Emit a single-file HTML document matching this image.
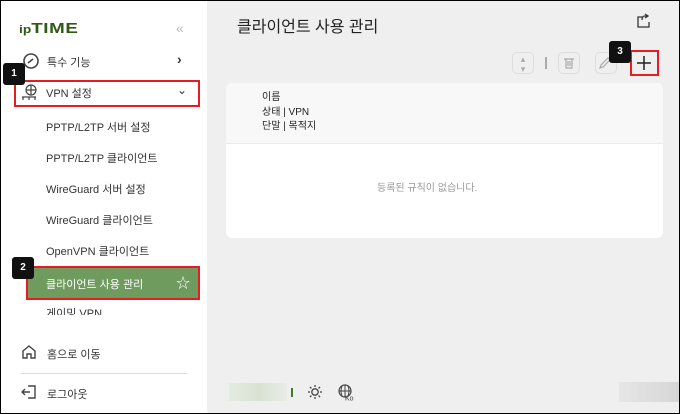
<!DOCTYPE html>
<html><head><meta charset="utf-8"><style>
*{margin:0;padding:0;box-sizing:border-box}
body{width:680px;height:414px;overflow:hidden;font-family:"Liberation Sans","Noto Sans CJK KR",sans-serif;background:#000;position:relative}
#wrap{position:absolute;left:1px;top:1px;width:678px;height:412px;background:#efefef;overflow:hidden}
#side{position:absolute;left:0;top:0;width:206px;height:412px;background:#fff}
.t{position:absolute;font-size:11px;color:#333;white-space:nowrap}
.badge{position:absolute;width:22px;height:22px;background:#111;color:#fff;font-size:10px;font-weight:bold;text-align:center;line-height:22px;border-radius:3px}
.red{position:absolute;border:2.5px solid #e51c23}
</style></head><body><div id="wrap">
<div id="side">
 <div class="t" style="left:18px;top:19px;font-size:15px;font-weight:900;color:#2f5a14;letter-spacing:0.5px;transform:scaleX(1.25);transform-origin:left"><span style="font-size:11px;font-weight:bold;letter-spacing:0">ip</span>TIME</div>
 <div class="t" style="left:175px;top:19px;color:#bbb;font-size:14px">«</div>
 <svg style="position:absolute;left:21px;top:51px" width="18" height="18" viewBox="0 0 18 18"><circle cx="9" cy="9" r="7" fill="none" stroke="#444" stroke-width="1.6"/><path d="M6 11l5-4" stroke="#444" stroke-width="1.6"/></svg>
 <div class="t" style="left:46px;top:53px">특수 기능</div>
 <div class="t" style="left:176px;top:50px;font-size:14px;font-weight:bold">›</div>
 <svg style="position:absolute;left:19px;top:82px" width="18" height="18" viewBox="0 0 18 18"><circle cx="11" cy="7" r="5" fill="none" stroke="#444" stroke-width="1.2"/><path d="M6 7h10M11 2v10M2 14h14M3 14v3M9 14v3M15 14v3" stroke="#444" stroke-width="1.2"/></svg>
 <div class="t" style="left:45px;top:84px">VPN 설정</div>
 <div class="t" style="left:176px;top:82px;font-size:12px">⌄</div>
 <div class="red" style="left:13px;top:79px;width:186px;height:27px"></div>
 <div class="badge" style="left:2px;top:62px">1</div>
 <div class="t" style="left:45px;top:118px">PPTP/L2TP 서버 설정</div>
 <div class="t" style="left:45px;top:149px">PPTP/L2TP 클라이언트</div>
 <div class="t" style="left:45px;top:180px">WireGuard 서버 설정</div>
 <div class="t" style="left:45px;top:211px">WireGuard 클라이언트</div>
 <div class="t" style="left:45px;top:242px">OpenVPN 클라이언트</div>
 <div style="position:absolute;left:26px;top:266px;width:172px;height:31px;background:#6f9b5e"></div>
 <div class="t" style="left:45px;top:275px;color:#fff">클라이언트 사용 관리</div>
 <div class="t" style="left:175px;top:272px;color:#fff;font-size:14px">☆</div>
 <div class="red" style="left:25px;top:265px;width:174px;height:34px"></div>
 <div class="badge" style="left:11px;top:256px">2</div>
 <div class="t" style="left:45px;top:304px;height:10px;overflow:hidden">게이밍 VPN</div>
 <svg style="position:absolute;left:20px;top:343px" width="16" height="16" viewBox="0 0 16 16"><path d="M2 7l6-5 6 5v7h-4v-4H6v4H2z" fill="none" stroke="#444" stroke-width="1.4"/></svg>
 <div class="t" style="left:46px;top:345px">홈으로 이동</div>
 <div style="position:absolute;left:20px;top:372px;width:166px;height:1px;background:#ddd"></div>
 <svg style="position:absolute;left:20px;top:383px" width="16" height="16" viewBox="0 0 16 16"><path d="M7 2h7v12H7M1 8h8M4 5L1 8l3 3" fill="none" stroke="#444" stroke-width="1.4"/></svg>
 <div class="t" style="left:46px;top:385px">로그아웃</div>
</div>
<div class="t" style="left:236px;top:12px;font-size:16px;color:#222">클라이언트 사용 관리</div>
<svg style="position:absolute;left:635px;top:12px" width="15" height="15" viewBox="0 0 15 15"><path d="M6 4H2v10h11V9M9 1l3 2-3 2M12 3H9q-3 0-3 4" fill="none" stroke="#333" stroke-width="1.3"/></svg>
<div style="position:absolute;left:511px;top:51px;width:22px;height:22px;border:1px solid #ddd;border-radius:5px;color:#aaa;font-size:9px;text-align:center;line-height:10px;padding-top:1px">▴<br>▾</div>
<div style="position:absolute;left:544px;top:56px;width:2px;height:12px;background:#aaa"></div>
<div style="position:absolute;left:557px;top:51px;width:22px;height:22px;border:1px solid #ddd;border-radius:5px"></div>
<svg style="position:absolute;left:562px;top:56px" width="12" height="12" viewBox="0 0 12 12"><path d="M1 2h10M3 2v9h6V2M5 4v5M7 4v5" fill="none" stroke="#aaa" stroke-width="1.2"/></svg>
<div style="position:absolute;left:594px;top:51px;width:22px;height:22px;border:1px solid #ddd;border-radius:5px"></div>
<svg style="position:absolute;left:597px;top:55px" width="14" height="14" viewBox="0 0 14 14"><path d="M2 12l1-3 7-7 2 2-7 7z" fill="none" stroke="#aaa" stroke-width="1.2"/></svg>
<div class="red" style="left:629px;top:49px;width:29px;height:26px"></div>
<svg style="position:absolute;left:636px;top:55px" width="14" height="14" viewBox="0 0 14 14"><path d="M7 0v14M0 7h14" stroke="#222" stroke-width="1.5"/></svg>
<div class="badge" style="left:608px;top:40px">3</div>
<div style="position:absolute;left:225px;top:82px;width:437px;height:155px;background:#fff;border-radius:6px;overflow:hidden">
 <div style="height:61px;background:#f8f8f8;border-bottom:1px solid #eaeaea"></div>
</div>
<div class="t" style="left:261px;top:90px;font-size:10px;color:#222;line-height:14.5px">이름<br>상태 | VPN<br>단말 | 목적지</div>
<div class="t" style="left:376px;top:178px;font-size:10px;color:#999">등록된 규칙이 없습니다.</div>
<div style="position:absolute;left:228px;top:382px;width:58px;height:18px;background:linear-gradient(90deg,#e4ece2,#d7e2d3,#e8ece6)"></div>
<div style="position:absolute;left:290px;top:387px;width:2px;height:9px;background:#3d7a2a"></div>
<svg style="position:absolute;left:306px;top:383px" width="16" height="16" viewBox="0 0 16 16"><circle cx="8" cy="8" r="3.2" fill="none" stroke="#444" stroke-width="1.3"/><path d="M8 1v2M8 13v2M1 8h2M13 8h2M3 3l1.4 1.4M11.6 11.6L13 13M3 13l1.4-1.4M11.6 4.4L13 3" stroke="#444" stroke-width="1.3"/></svg>
<svg style="position:absolute;left:336px;top:382px" width="18" height="18" viewBox="0 0 18 18"><circle cx="8" cy="8" r="6" fill="none" stroke="#444" stroke-width="1.2"/><path d="M2 8h12M8 2v12M5 3q-2 5 0 10M11 3q2 5 0 10" fill="none" stroke="#444" stroke-width="1"/><text x="8" y="17.5" font-size="7" fill="#444" font-family="Liberation Sans">Ko</text></svg>
<div style="position:absolute;left:618px;top:381px;width:60px;height:20px;background:linear-gradient(90deg,#e6e6e6,#d6d6d6)"></div>
</div></body></html>
